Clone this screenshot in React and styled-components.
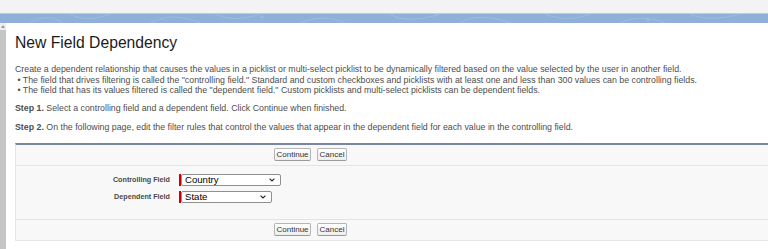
import React from 'react'
import styled, { createGlobalStyle } from 'styled-components'

const GlobalStyle = createGlobalStyle`
  html, body {
    margin: 0;
    padding: 0;
    background: #ffffff;
    overflow: hidden;
  }
  body {
    font-family: Arial, "Liberation Sans", sans-serif;
    color: #3e3e3e;
  }
`

const TopBar = styled.div`
  height: 13px;
  background: #f3f3f3;
  border-bottom: 1px solid #c9c9c9;
`

const Band = styled.div`
  height: 9px;
  background: #8fb0d8;
  overflow: hidden;
  line-height: 0;
`

const Shell = styled.div`
  display: flex;
  height: 226px;
`

const ScrollStrip = styled.div`
  width: 6px;
  flex: none;
  display: flex;
  flex-direction: column;
  background: #c6c6c6;
`

const ScrollArrow = styled.div`
  height: 7px;
  background: #efefef;
  display: flex;
  align-items: center;
  justify-content: center;
`

const Content = styled.div`
  flex: 1;
  padding-left: 9px;
  min-width: 0;
`

const Title = styled.h1`
  margin: 11px 0 0 0;
  font-size: 15.7px;
  line-height: 18px;
  font-weight: 400;
  color: #1b1b1b;
`

const Description = styled.div`
  margin-top: 12px;
  font-size: 8.8px;
  line-height: 10.7px;
  color: #4d4d4d;
  white-space: nowrap;
`

const Step = styled.p`
  margin: ${({ $top }) => $top}px 0 0 0;
  font-size: 8.8px;
  line-height: 10.7px;
  color: #4d4d4d;
  white-space: nowrap;
`

const Bold = styled.strong`
  font-weight: bold;
`

const Panel = styled.div`
  margin-top: 10px;
  background: #f8f8f8;
  border-top: 2px solid #7886a3;
  border-left: 1px solid #e6e6e6;
  border-bottom: 1px solid #e6e6e6;
`

const ButtonRow = styled.div`
  height: 20px;
  display: flex;
  align-items: center;
  gap: 6px;
  padding-left: 258px;
  border-bottom: ${({ $divider }) => ($divider ? '1px solid #e3e3e3' : 'none')};
  border-top: ${({ $topDivider }) => ($topDivider ? '1px solid #e3e3e3' : 'none')};
`

const Button = styled.button`
  height: 13px;
  padding: 0 1.5px;
  font-family: Arial, "Liberation Sans", sans-serif;
  font-size: 8px;
  line-height: 11px;
  color: #333;
  background: linear-gradient(#ffffff, #eeeeee);
  border: 1px solid #b5b5b5;
  border-bottom-color: #9a9a9a;
  border-radius: 2px;
  cursor: pointer;
`

const Fields = styled.div`
  padding: 8px 0 16px 0;
  display: flex;
  flex-direction: column;
  gap: 5px;
`

const FieldRow = styled.div`
  display: flex;
  align-items: center;
  height: 12px;
`

const Label = styled.label`
  width: 154px;
  padding-right: 9px;
  text-align: right;
  font-size: 7.2px;
  font-weight: bold;
  color: #4a4a4a;
`

const Required = styled.div`
  position: relative;
  display: flex;
  height: 12px;
  border-left: 2px solid #c00;
`

const Select = styled.select`
  appearance: none;
  -webkit-appearance: none;
  box-sizing: border-box;
  width: ${({ $width }) => $width}px;
  height: 12px;
  margin: 0;
  padding: 0 0 0 3px;
  font-family: Arial, "Liberation Sans", sans-serif;
  font-size: 9.6px;
  line-height: 10px;
  color: #000;
  background: #fff;
  border: 1px solid #8f8f8f;
  border-radius: 2px;
  outline: none;
`

const Chevron = styled.svg`
  position: absolute;
  right: 6px;
  top: 4px;
  pointer-events: none;
`

const Waves = () => (
  <svg width="100%" height="9" viewBox="0 0 768 9" preserveAspectRatio="none">
    <g fill="none" stroke="#a6c0e1" strokeWidth="0.7">
      <path d="M30 9 C40 2 55 2 62 9" />
      <path d="M70 0 C80 6 95 6 110 0" />
      <path d="M150 9 C165 1 180 1 200 9" />
      <path d="M215 0 C225 5 240 7 260 0" />
      <path d="M300 9 C315 3 330 2 345 9" />
      <path d="M390 0 C400 7 420 7 440 0" />
      <path d="M460 9 C470 2 490 1 510 9" />
      <path d="M545 0 C560 6 575 6 590 0" />
      <path d="M620 9 C635 2 650 3 665 9" />
      <path d="M690 0 C700 5 720 6 740 0" />
      <circle cx="262" cy="3" r="1.2" />
      <circle cx="648" cy="6" r="1.2" />
    </g>
  </svg>
)

const UpArrow = () => (
  <svg width="4" height="3" viewBox="0 0 4 3">
    <path d="M0 3 L2 0 L4 3 Z" fill="#9a9a9a" />
  </svg>
)

const Picklist = ({ width, value }) => (
  <Required>
    <Select $width={width} defaultValue={value}>
      <option>{value}</option>
    </Select>
    <Chevron width="6" height="4" viewBox="0 0 6 4">
      <path d="M0.6 0.6 L3 3 L5.4 0.6" fill="none" stroke="#222" strokeWidth="1.1" />
    </Chevron>
  </Required>
)

const App = () => {
  return (
    <>
      <GlobalStyle />
      <TopBar />
      <Band>
        <Waves />
      </Band>
      <Shell>
        <ScrollStrip>
          <ScrollArrow>
            <UpArrow />
          </ScrollArrow>
        </ScrollStrip>
        <Content>
          <Title>New Field Dependency</Title>
          <Description>
            Create a dependent relationship that causes the values in a picklist or multi-select picklist to be dynamically filtered based on the value selected by the user in another field.
            <br />&nbsp;• The field that drives filtering is called the "controlling field." Standard and custom checkboxes and picklists with at least one and less than 300 values can be controlling fields.
            <br />&nbsp;• The field that has its values filtered is called the "dependent field." Custom picklists and multi-select picklists can be dependent fields.
          </Description>
          <Step $top={7}>
            <Bold>Step 1.</Bold> Select a controlling field and a dependent field. Click Continue when finished.
          </Step>
          <Step $top={8}>
            <Bold>Step 2.</Bold> On the following page, edit the filter rules that control the values that appear in the dependent field for each value in the controlling field.
          </Step>
          <Panel>
            <ButtonRow $divider>
              <Button>Continue</Button>
              <Button>Cancel</Button>
            </ButtonRow>
            <Fields>
              <FieldRow>
                <Label>Controlling Field</Label>
                <Picklist width={100} value="Country" />
              </FieldRow>
              <FieldRow>
                <Label>Dependent Field</Label>
                <Picklist width={91} value="State" />
              </FieldRow>
            </Fields>
            <ButtonRow $topDivider>
              <Button>Continue</Button>
              <Button>Cancel</Button>
            </ButtonRow>
          </Panel>
        </Content>
      </Shell>
    </>
  )
}

export default App
